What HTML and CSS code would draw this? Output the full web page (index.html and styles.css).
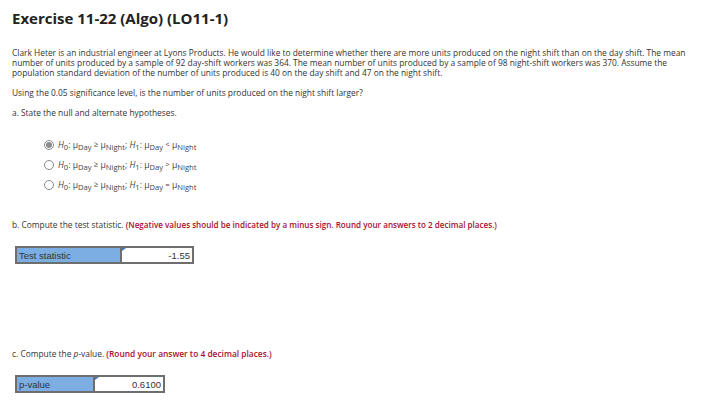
FILE: index.html
```html
<!DOCTYPE html>
<html>
<head>
<meta charset="utf-8">
<link rel="stylesheet" href="styles.css">
</head>
<body>
<div class="page">
  <h1 class="title">Exercise 11-22 (Algo) (LO11-1)</h1>
  <p class="para first">Clark Heter is an industrial engineer at Lyons Products. He would like to determine whether there are more units produced on the night shift than on the day shift. The mean number of units produced by a sample of 92 day-shift workers was 364. The mean number of units produced by a sample of 98 night-shift workers was 370. Assume the population standard deviation of the number of units produced is 40 on the day shift and 47 on the night shift.</p>
  <p class="para using">Using the 0.05 significance level, is the number of units produced on the night shift larger?</p>
  <p class="para state">a. State the null and alternate hypotheses.</p>
  <div class="options">
    <div class="opt"><span class="radio checked"></span><span class="hyp"><i>H</i><sub>0</sub>: μ<sub>Day</sub> <span class="rel">≥</span> μ<sub>Night</sub>; <i>H</i><sub>1</sub>: μ<sub>Day</sub> <span class="rel">&lt;</span> μ<sub>Night</sub></span></div>
    <div class="opt"><span class="radio"></span><span class="hyp"><i>H</i><sub>0</sub>: μ<sub>Day</sub> <span class="rel">≥</span> μ<sub>Night</sub>; <i>H</i><sub>1</sub>: μ<sub>Day</sub> <span class="rel">&gt;</span> μ<sub>Night</sub></span></div>
    <div class="opt"><span class="radio"></span><span class="hyp"><i>H</i><sub>0</sub>: μ<sub>Day</sub> <span class="rel">≥</span> μ<sub>Night</sub>; <i>H</i><sub>1</sub>: μ<sub>Day</sub> <span class="rel">=</span> μ<sub>Night</sub></span></div>
  </div>
  <p class="para partb">b. Compute the test statistic. <b class="note">(Negative values should be indicated by a minus sign. Round your answers to 2 decimal places.)</b></p>
  <div class="answer wide">
    <div class="label">Test statistic</div>
    <div class="value"><span class="flag"></span>-1.55</div>
  </div>
  <p class="para partc">c. Compute the <i>p</i>-value. <b class="note">(Round your answer to 4 decimal places.)</b></p>
  <div class="answer narrow">
    <div class="label">p-value</div>
    <div class="value"><span class="flag"></span>0.6100</div>
  </div>
</div>
</body>
</html>
```
FILE: styles.css
```css
body {
  margin: 0;
  background: #ffffff;
  font-family: "Open Sans", "Noto Sans", sans-serif;
  color: #333333;
}
.page {
  padding: 8px 12px;
}
.title {
  margin: 0;
  font-size: 15px;
  line-height: 20px;
  font-weight: 700;
  color: #222222;
}
.para {
  margin: 0;
  font-size: 8.4px;
  line-height: 10px;
}
.first { margin-top: 20px; }
.using { margin-top: 10px; }
.state { margin-top: 10px; }
.options {
  margin-top: 17px;
  padding-left: 32px;
  display: flex;
  flex-direction: column;
}
.opt {
  height: 20px;
  display: flex;
  align-items: center;
  gap: 4px;
}
.radio {
  width: 8px;
  height: 8px;
  border: 1px solid #8a8a8a;
  border-radius: 50%;
  box-sizing: content-box;
  display: inline-flex;
  align-items: center;
  justify-content: center;
  background: #fff;
}
.radio.checked::after {
  content: "";
  width: 6px;
  height: 6px;
  border-radius: 50%;
  background: #8a8a8a;
}
.hyp {
  font-size: 8.6px;
  color: #444444;
}
.hyp sub {
  font-size: 7.6px;
  vertical-align: -2px;
  line-height: 0;
}
.hyp .rel {
  font-size: 7.8px;
  vertical-align: 1px;
}
.partb { margin-top: 25px; }
.partc { margin-top: 85px; }
.note {
  color: #a8102e;
  font-weight: 600;
  font-size: 8.1px;
}
.partc .note { font-size: 8.4px; }
.answer {
  margin-top: 16px;
  margin-left: 3px;
  display: flex;
  height: 18px;
  border: 2px solid #6e6e6e;
  box-sizing: border-box;
  font-family: "Liberation Sans", Arial, sans-serif;
  font-size: 9.5px;
  color: #333;
}
.answer.wide { width: 179px; }
.answer.wide .label { width: 101px; }
.answer.narrow { width: 150px; }
.answer.narrow .label { width: 74px; }
.label {
  background: #7daee3;
  border-right: 2px solid #6e6e6e;
  padding-left: 2px;
  display: flex;
  align-items: center;
}
.value {
  position: relative;
  flex: 1;
  background: #fff;
  display: flex;
  align-items: center;
  justify-content: flex-end;
  padding-right: 2px;
}
.flag {
  position: absolute;
  left: 0;
  top: 0;
  width: 0;
  height: 0;
  border-top: 3px solid #3b78c4;
  border-right: 4px solid transparent;
}
```
